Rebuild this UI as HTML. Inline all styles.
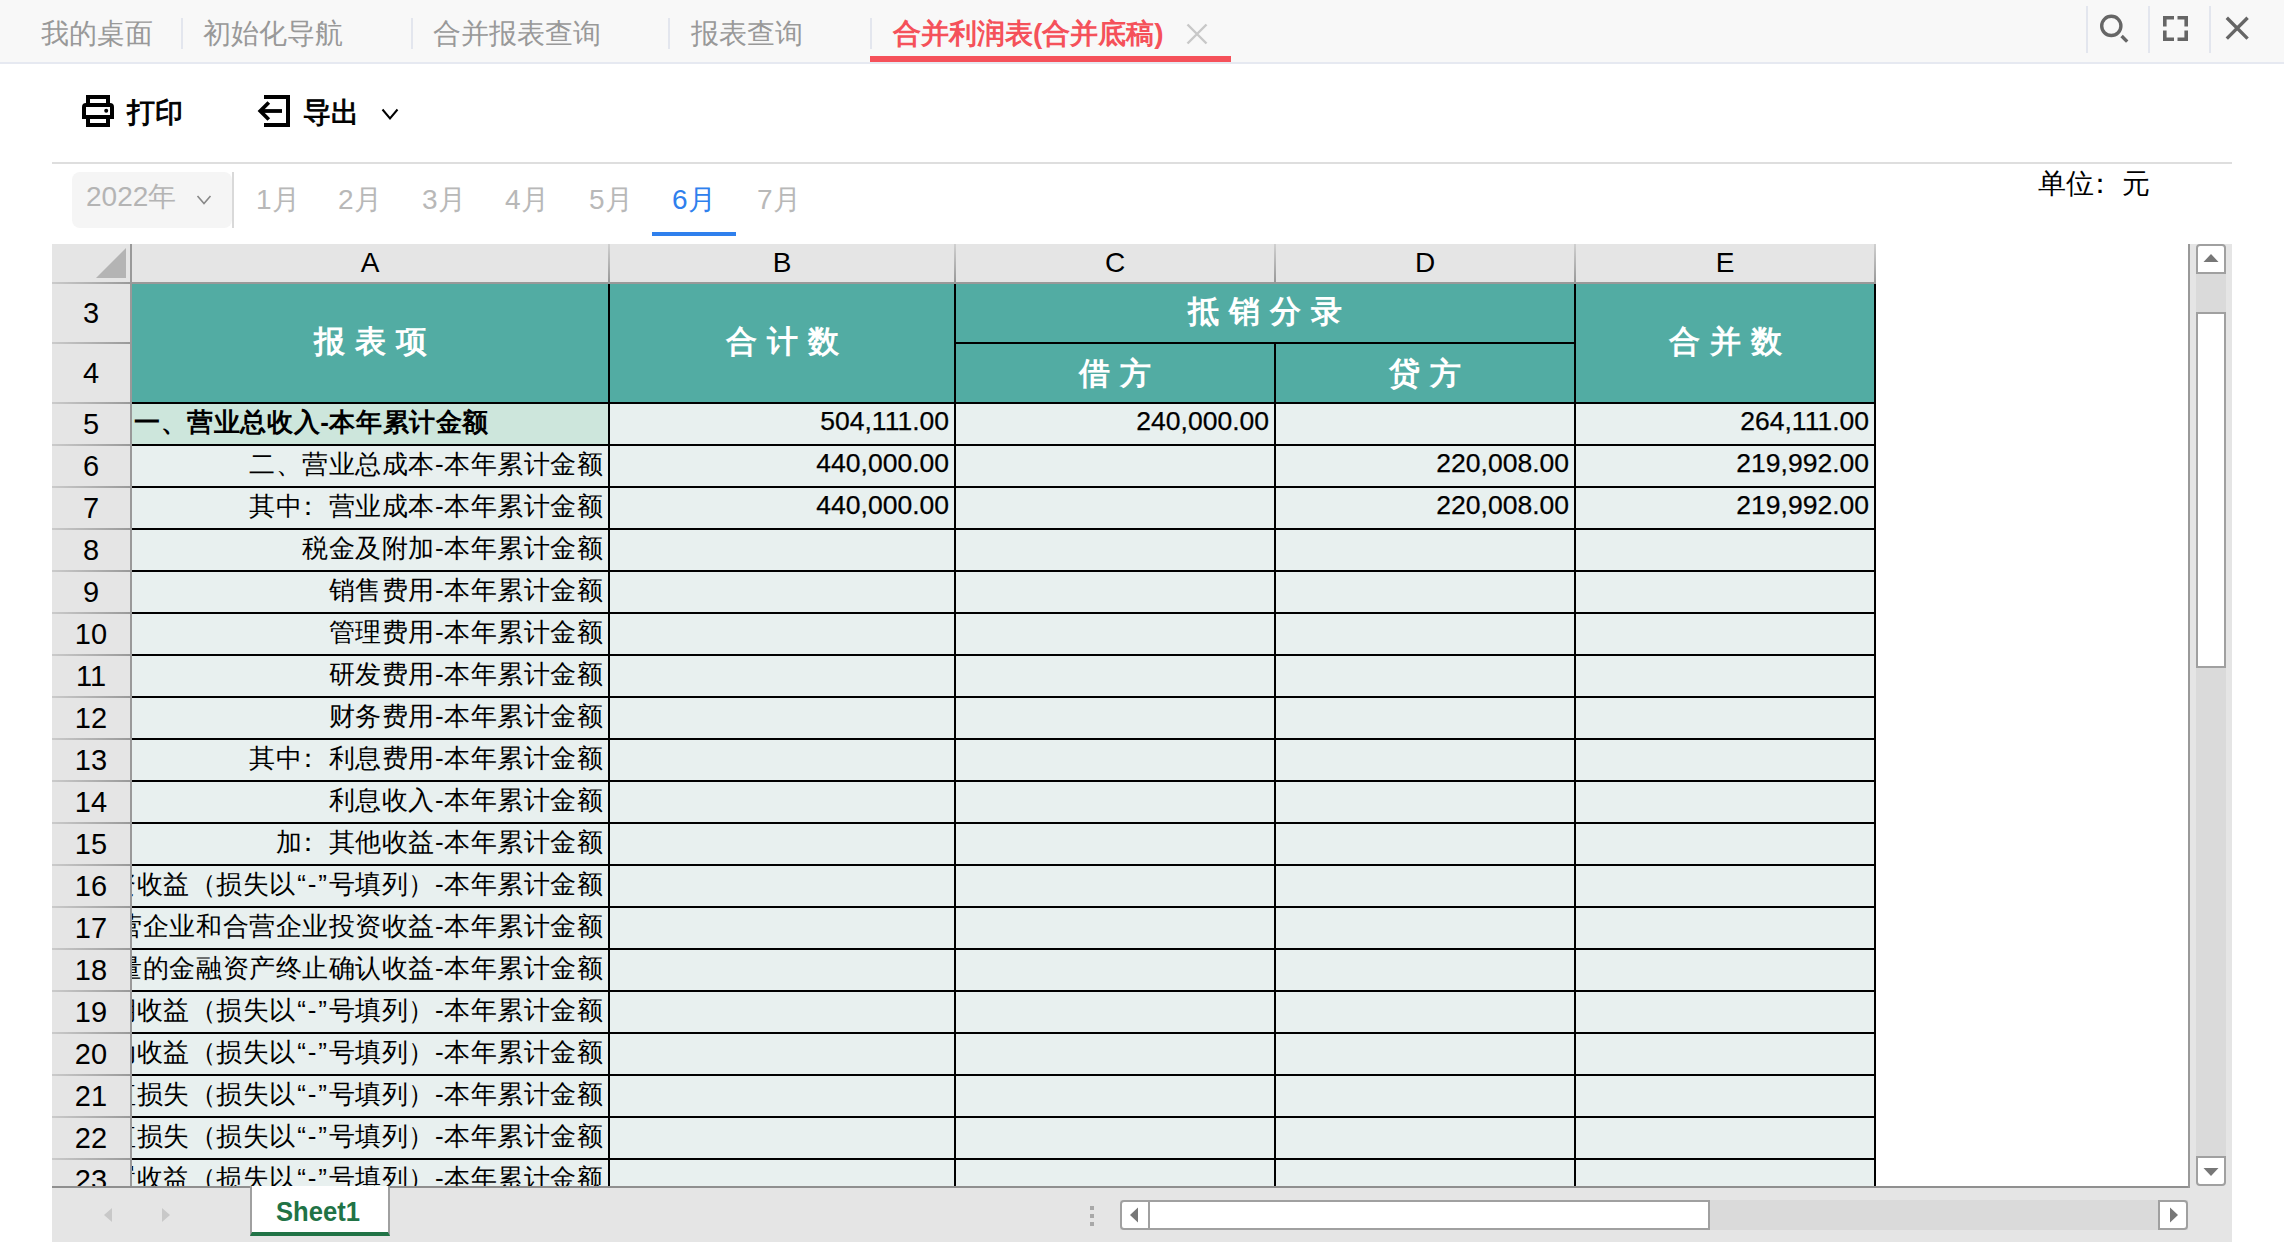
<!DOCTYPE html>
<html><head><meta charset="utf-8"><style>
*{margin:0;padding:0;box-sizing:border-box}
html,body{width:2284px;height:1250px;overflow:hidden;background:#fff;font-family:"Liberation Sans",sans-serif;position:relative}
.a{position:absolute}
.t{position:absolute;white-space:nowrap;line-height:1}
</style></head><body>

<div class="a" style="left:0;top:0;width:2284px;height:62px;background:#f8f8f8"></div>
<div class="a" style="left:0;top:62px;width:2284px;height:2px;background:#e6e9f1"></div>
<div class="t" style="left:41px;top:20px;font-size:28px;color:#999">我的桌面</div>
<div class="t" style="left:203px;top:20px;font-size:28px;color:#999">初始化导航</div>
<div class="t" style="left:433px;top:20px;font-size:28px;color:#999">合并报表查询</div>
<div class="t" style="left:691px;top:20px;font-size:28px;color:#999">报表查询</div>
<div class="a" style="left:181px;top:18px;width:2px;height:31px;background:#e3e6ee"></div>
<div class="a" style="left:411px;top:18px;width:2px;height:31px;background:#e3e6ee"></div>
<div class="a" style="left:668px;top:18px;width:2px;height:31px;background:#e3e6ee"></div>
<div class="a" style="left:870px;top:18px;width:2px;height:31px;background:#e3e6ee"></div>
<div class="t" style="left:893px;top:20px;font-size:28px;color:#f5515a;font-weight:bold">合并利润表(合并底稿)</div>
<svg class="a" style="left:1185px;top:22px" width="24" height="24" viewBox="0 0 24 24"><path d="M2.5 2.5L21.5 21.5M21.5 2.5L2.5 21.5" stroke="#c8c8c8" stroke-width="2.4" fill="none"/></svg>
<div class="a" style="left:870px;top:56px;width:361px;height:6px;background:#f5515a"></div>
<div class="a" style="left:2086px;top:6px;width:2px;height:47px;background:#e3e6ee"></div>
<div class="a" style="left:2148px;top:6px;width:2px;height:47px;background:#e3e6ee"></div>
<div class="a" style="left:2209px;top:6px;width:2px;height:47px;background:#e3e6ee"></div>
<svg class="a" style="left:2096px;top:10px" width="36" height="36" viewBox="0 0 36 36"><circle cx="15.3" cy="15.9" r="9.6" stroke="#666" stroke-width="3.4" fill="none"/><path d="M25.6 26L31.2 31.6" stroke="#666" stroke-width="3.4" fill="none"/></svg>
<svg class="a" style="left:2163px;top:16px" width="26" height="26" viewBox="0 0 26 26"><path d="M1.8 10.6V1.8H11M14.5 1.8H23.2V10.6M23.2 14.5V23.2H14.5M11 23.2H1.8V14.5" stroke="#666" stroke-width="3.6" fill="none"/></svg>
<svg class="a" style="left:2224px;top:15px" width="26" height="26" viewBox="0 0 26 26"><path d="M2.8 2.8L23.6 23.6M23.6 2.8L2.8 23.6" stroke="#666" stroke-width="3.4" fill="none"/></svg>
<svg class="a" style="left:82px;top:95px" width="32" height="32" viewBox="0 0 32 32">
<path d="M4 0H28V8H24V4H8V8H4Z" fill="#000"/>
<path d="M4 8H28A4 4 0 0 1 32 12V24H28V20H4V24H0V12A4 4 0 0 1 4 8ZM4 12V20H28V12Z" fill="#000" fill-rule="evenodd"/>
<circle cx="24.2" cy="15.7" r="2" fill="#000"/>
<path d="M4 20H28V32H4ZM8 24V28H24V24Z" fill="#000" fill-rule="evenodd"/>
</svg>
<div class="t" style="left:127px;top:99px;font-size:28px;color:#000;-webkit-text-stroke:0.9px #000">打印</div>
<svg class="a" style="left:256px;top:94px" width="36" height="34" viewBox="0 0 36 34">
<path d="M8 1H34V33H8V29H30V5H8Z" fill="#000"/>
<path d="M4 17H26" stroke="#000" stroke-width="3.8" fill="none"/>
<path d="M12.8 8.5L4.3 17L12.8 25.5" stroke="#000" stroke-width="3.8" fill="none"/>
</svg>
<div class="t" style="left:303px;top:99px;font-size:28px;color:#000;-webkit-text-stroke:0.9px #000">导出</div>
<svg class="a" style="left:381px;top:107px" width="18" height="14" viewBox="0 0 18 14"><path d="M1.5 2.5L9 11.5L16.5 2.5" stroke="#000" stroke-width="2" fill="none"/></svg>
<div class="a" style="left:52px;top:162px;width:2180px;height:2px;background:#dedede"></div>
<div class="a" style="left:72px;top:172px;width:160px;height:56px;background:#f5f5f5;border-radius:8px"></div>
<div class="t" style="left:86px;top:183px;font-size:28px;color:#b4b4b4">2022年</div>
<svg class="a" style="left:196px;top:193px" width="16" height="14" viewBox="0 0 16 14"><path d="M1.5 3L8 10.5L14.5 3" stroke="#888" stroke-width="1.6" fill="none"/></svg>
<div class="a" style="left:232px;top:172px;width:2px;height:56px;background:#d9d9d9"></div>
<div class="t" style="left:256px;top:186px;font-size:28px;color:#b8b8b8">1月</div>
<div class="t" style="left:338px;top:186px;font-size:28px;color:#b8b8b8">2月</div>
<div class="t" style="left:422px;top:186px;font-size:28px;color:#b8b8b8">3月</div>
<div class="t" style="left:505px;top:186px;font-size:28px;color:#b8b8b8">4月</div>
<div class="t" style="left:589px;top:186px;font-size:28px;color:#b8b8b8">5月</div>
<div class="t" style="left:672px;top:186px;font-size:28px;color:#2f80ed">6月</div>
<div class="t" style="left:757px;top:186px;font-size:28px;color:#b8b8b8">7月</div>
<div class="a" style="left:652px;top:232px;width:84px;height:4px;background:#2f80ed"></div>
<div class="t" style="left:2038px;top:170px;font-size:28px;color:#000">单位<span style="position:relative;left:-8px">：</span>元</div>
<div class="a" style="left:52px;top:244px;width:2136px;height:942px;overflow:hidden;background:#fff">
<div class="a" style="left:0px;top:0px;width:1824px;height:38px;background:#e5e5e5;"></div>
<div class="a" style="left:0px;top:0px;width:78px;height:942px;background:#e5e5e5;"></div>
<div class="a" style="left:0px;top:38px;width:1824px;height:2px;background:#999;"></div>
<div class="a" style="left:0px;top:38px;width:78px;height:2px;background:linear-gradient(to right,#cacaca,#999);"></div>
<div class="a" style="left:78px;top:0px;width:2px;height:38px;background:linear-gradient(to bottom,#d0d0d0,#999);"></div>
<div class="a" style="left:556px;top:0px;width:2px;height:38px;background:linear-gradient(to bottom,#d0d0d0,#999);"></div>
<div class="a" style="left:902px;top:0px;width:2px;height:38px;background:linear-gradient(to bottom,#d0d0d0,#999);"></div>
<div class="a" style="left:1222px;top:0px;width:2px;height:38px;background:linear-gradient(to bottom,#d0d0d0,#999);"></div>
<div class="a" style="left:1522px;top:0px;width:2px;height:38px;background:linear-gradient(to bottom,#d0d0d0,#999);"></div>
<div class="a" style="left:1822px;top:0px;width:2px;height:38px;background:linear-gradient(to bottom,#d0d0d0,#999);"></div>
<svg class="a" style="left:44px;top:4px" width="30" height="30" viewBox="0 0 30 30"><path d="M0 30L30 0V30Z" fill="#b4b4b4"/></svg>
<div class="a" style="left:80px;top:0px;width:476px;height:38px;display:flex;align-items:center;overflow:hidden;justify-content:center;font-size:28px;color:#000"><span style="white-space:nowrap;line-height:1;position:relative;top:0px">A</span></div>
<div class="a" style="left:558px;top:0px;width:344px;height:38px;display:flex;align-items:center;overflow:hidden;justify-content:center;font-size:28px;color:#000"><span style="white-space:nowrap;line-height:1;position:relative;top:0px">B</span></div>
<div class="a" style="left:904px;top:0px;width:318px;height:38px;display:flex;align-items:center;overflow:hidden;justify-content:center;font-size:28px;color:#000"><span style="white-space:nowrap;line-height:1;position:relative;top:0px">C</span></div>
<div class="a" style="left:1224px;top:0px;width:298px;height:38px;display:flex;align-items:center;overflow:hidden;justify-content:center;font-size:28px;color:#000"><span style="white-space:nowrap;line-height:1;position:relative;top:0px">D</span></div>
<div class="a" style="left:1524px;top:0px;width:298px;height:38px;display:flex;align-items:center;overflow:hidden;justify-content:center;font-size:28px;color:#000"><span style="white-space:nowrap;line-height:1;position:relative;top:0px">E</span></div>
<div class="a" style="left:0px;top:40px;width:78px;height:58px;display:flex;align-items:center;overflow:hidden;justify-content:center;font-size:29px;color:#000"><span style="white-space:nowrap;line-height:1;position:relative;top:0px">3</span></div>
<div class="a" style="left:0px;top:98px;width:78px;height:2px;background:linear-gradient(to right,#cacaca,#999);"></div>
<div class="a" style="left:0px;top:100px;width:78px;height:58px;display:flex;align-items:center;overflow:hidden;justify-content:center;font-size:29px;color:#000"><span style="white-space:nowrap;line-height:1;position:relative;top:0px">4</span></div>
<div class="a" style="left:0px;top:158px;width:78px;height:2px;background:linear-gradient(to right,#cacaca,#999);"></div>
<div class="a" style="left:0px;top:160px;width:78px;height:40px;display:flex;align-items:center;overflow:hidden;justify-content:center;font-size:29px;color:#000"><span style="white-space:nowrap;line-height:1;position:relative;top:0px">5</span></div>
<div class="a" style="left:0px;top:200px;width:78px;height:2px;background:linear-gradient(to right,#cacaca,#999);"></div>
<div class="a" style="left:0px;top:202px;width:78px;height:40px;display:flex;align-items:center;overflow:hidden;justify-content:center;font-size:29px;color:#000"><span style="white-space:nowrap;line-height:1;position:relative;top:0px">6</span></div>
<div class="a" style="left:0px;top:242px;width:78px;height:2px;background:linear-gradient(to right,#cacaca,#999);"></div>
<div class="a" style="left:0px;top:244px;width:78px;height:40px;display:flex;align-items:center;overflow:hidden;justify-content:center;font-size:29px;color:#000"><span style="white-space:nowrap;line-height:1;position:relative;top:0px">7</span></div>
<div class="a" style="left:0px;top:284px;width:78px;height:2px;background:linear-gradient(to right,#cacaca,#999);"></div>
<div class="a" style="left:0px;top:286px;width:78px;height:40px;display:flex;align-items:center;overflow:hidden;justify-content:center;font-size:29px;color:#000"><span style="white-space:nowrap;line-height:1;position:relative;top:0px">8</span></div>
<div class="a" style="left:0px;top:326px;width:78px;height:2px;background:linear-gradient(to right,#cacaca,#999);"></div>
<div class="a" style="left:0px;top:328px;width:78px;height:40px;display:flex;align-items:center;overflow:hidden;justify-content:center;font-size:29px;color:#000"><span style="white-space:nowrap;line-height:1;position:relative;top:0px">9</span></div>
<div class="a" style="left:0px;top:368px;width:78px;height:2px;background:linear-gradient(to right,#cacaca,#999);"></div>
<div class="a" style="left:0px;top:370px;width:78px;height:40px;display:flex;align-items:center;overflow:hidden;justify-content:center;font-size:29px;color:#000"><span style="white-space:nowrap;line-height:1;position:relative;top:0px">10</span></div>
<div class="a" style="left:0px;top:410px;width:78px;height:2px;background:linear-gradient(to right,#cacaca,#999);"></div>
<div class="a" style="left:0px;top:412px;width:78px;height:40px;display:flex;align-items:center;overflow:hidden;justify-content:center;font-size:29px;color:#000"><span style="white-space:nowrap;line-height:1;position:relative;top:0px">11</span></div>
<div class="a" style="left:0px;top:452px;width:78px;height:2px;background:linear-gradient(to right,#cacaca,#999);"></div>
<div class="a" style="left:0px;top:454px;width:78px;height:40px;display:flex;align-items:center;overflow:hidden;justify-content:center;font-size:29px;color:#000"><span style="white-space:nowrap;line-height:1;position:relative;top:0px">12</span></div>
<div class="a" style="left:0px;top:494px;width:78px;height:2px;background:linear-gradient(to right,#cacaca,#999);"></div>
<div class="a" style="left:0px;top:496px;width:78px;height:40px;display:flex;align-items:center;overflow:hidden;justify-content:center;font-size:29px;color:#000"><span style="white-space:nowrap;line-height:1;position:relative;top:0px">13</span></div>
<div class="a" style="left:0px;top:536px;width:78px;height:2px;background:linear-gradient(to right,#cacaca,#999);"></div>
<div class="a" style="left:0px;top:538px;width:78px;height:40px;display:flex;align-items:center;overflow:hidden;justify-content:center;font-size:29px;color:#000"><span style="white-space:nowrap;line-height:1;position:relative;top:0px">14</span></div>
<div class="a" style="left:0px;top:578px;width:78px;height:2px;background:linear-gradient(to right,#cacaca,#999);"></div>
<div class="a" style="left:0px;top:580px;width:78px;height:40px;display:flex;align-items:center;overflow:hidden;justify-content:center;font-size:29px;color:#000"><span style="white-space:nowrap;line-height:1;position:relative;top:0px">15</span></div>
<div class="a" style="left:0px;top:620px;width:78px;height:2px;background:linear-gradient(to right,#cacaca,#999);"></div>
<div class="a" style="left:0px;top:622px;width:78px;height:40px;display:flex;align-items:center;overflow:hidden;justify-content:center;font-size:29px;color:#000"><span style="white-space:nowrap;line-height:1;position:relative;top:0px">16</span></div>
<div class="a" style="left:0px;top:662px;width:78px;height:2px;background:linear-gradient(to right,#cacaca,#999);"></div>
<div class="a" style="left:0px;top:664px;width:78px;height:40px;display:flex;align-items:center;overflow:hidden;justify-content:center;font-size:29px;color:#000"><span style="white-space:nowrap;line-height:1;position:relative;top:0px">17</span></div>
<div class="a" style="left:0px;top:704px;width:78px;height:2px;background:linear-gradient(to right,#cacaca,#999);"></div>
<div class="a" style="left:0px;top:706px;width:78px;height:40px;display:flex;align-items:center;overflow:hidden;justify-content:center;font-size:29px;color:#000"><span style="white-space:nowrap;line-height:1;position:relative;top:0px">18</span></div>
<div class="a" style="left:0px;top:746px;width:78px;height:2px;background:linear-gradient(to right,#cacaca,#999);"></div>
<div class="a" style="left:0px;top:748px;width:78px;height:40px;display:flex;align-items:center;overflow:hidden;justify-content:center;font-size:29px;color:#000"><span style="white-space:nowrap;line-height:1;position:relative;top:0px">19</span></div>
<div class="a" style="left:0px;top:788px;width:78px;height:2px;background:linear-gradient(to right,#cacaca,#999);"></div>
<div class="a" style="left:0px;top:790px;width:78px;height:40px;display:flex;align-items:center;overflow:hidden;justify-content:center;font-size:29px;color:#000"><span style="white-space:nowrap;line-height:1;position:relative;top:0px">20</span></div>
<div class="a" style="left:0px;top:830px;width:78px;height:2px;background:linear-gradient(to right,#cacaca,#999);"></div>
<div class="a" style="left:0px;top:832px;width:78px;height:40px;display:flex;align-items:center;overflow:hidden;justify-content:center;font-size:29px;color:#000"><span style="white-space:nowrap;line-height:1;position:relative;top:0px">21</span></div>
<div class="a" style="left:0px;top:872px;width:78px;height:2px;background:linear-gradient(to right,#cacaca,#999);"></div>
<div class="a" style="left:0px;top:874px;width:78px;height:40px;display:flex;align-items:center;overflow:hidden;justify-content:center;font-size:29px;color:#000"><span style="white-space:nowrap;line-height:1;position:relative;top:0px">22</span></div>
<div class="a" style="left:0px;top:914px;width:78px;height:2px;background:linear-gradient(to right,#cacaca,#999);"></div>
<div class="a" style="left:0px;top:916px;width:78px;height:40px;display:flex;align-items:center;overflow:hidden;justify-content:center;font-size:29px;color:#000"><span style="white-space:nowrap;line-height:1;position:relative;top:0px">23</span></div>
<div class="a" style="left:0px;top:956px;width:78px;height:2px;background:linear-gradient(to right,#cacaca,#999);"></div>
<div class="a" style="left:78px;top:0px;width:2px;height:942px;background:#999;"></div>
<div class="a" style="left:80px;top:40px;width:1742px;height:118px;background:#52aca3;"></div>
<div class="a" style="left:556px;top:40px;width:2px;height:120px;background:#000;"></div>
<div class="a" style="left:902px;top:40px;width:2px;height:120px;background:#000;"></div>
<div class="a" style="left:1522px;top:40px;width:2px;height:120px;background:#000;"></div>
<div class="a" style="left:1822px;top:40px;width:2px;height:120px;background:#000;"></div>
<div class="a" style="left:902px;top:98px;width:622px;height:2px;background:#000;"></div>
<div class="a" style="left:1222px;top:98px;width:2px;height:60px;background:#000;"></div>
<div class="a" style="left:80px;top:158px;width:1744px;height:2px;background:#000;"></div>
<div class="a" style="left:80px;top:40px;width:476px;height:118px;display:flex;align-items:center;overflow:hidden;justify-content:center;font-size:31px;color:#fff;font-weight:bold;letter-spacing:10px;padding-left:10px"><span style="white-space:nowrap;line-height:1;position:relative;top:-2px">报表项</span></div>
<div class="a" style="left:558px;top:40px;width:344px;height:118px;display:flex;align-items:center;overflow:hidden;justify-content:center;font-size:31px;color:#fff;font-weight:bold;letter-spacing:10px;padding-left:10px"><span style="white-space:nowrap;line-height:1;position:relative;top:-2px">合计数</span></div>
<div class="a" style="left:904px;top:40px;width:618px;height:58px;display:flex;align-items:center;overflow:hidden;justify-content:center;font-size:31px;color:#fff;font-weight:bold;letter-spacing:10px;padding-left:10px"><span style="white-space:nowrap;line-height:1;position:relative;top:-1.5px">抵销分录</span></div>
<div class="a" style="left:904px;top:100px;width:318px;height:58px;display:flex;align-items:center;overflow:hidden;justify-content:center;font-size:31px;color:#fff;font-weight:bold;letter-spacing:10px;padding-left:10px"><span style="white-space:nowrap;line-height:1;position:relative;top:0px">借方</span></div>
<div class="a" style="left:1224px;top:100px;width:298px;height:58px;display:flex;align-items:center;overflow:hidden;justify-content:center;font-size:31px;color:#fff;font-weight:bold;letter-spacing:10px;padding-left:10px"><span style="white-space:nowrap;line-height:1;position:relative;top:0px">贷方</span></div>
<div class="a" style="left:1524px;top:40px;width:298px;height:118px;display:flex;align-items:center;overflow:hidden;justify-content:center;font-size:31px;color:#fff;font-weight:bold;letter-spacing:10px;padding-left:10px"><span style="white-space:nowrap;line-height:1;position:relative;top:-2px">合并数</span></div>
<div class="a" style="left:80px;top:160px;width:476px;height:40px;background:#cde6dc;"></div>
<div class="a" style="left:558px;top:160px;width:1264px;height:40px;background:#e8f0ef;"></div>
<div class="a" style="left:80px;top:200px;width:1744px;height:2px;background:#000;"></div>
<div class="a" style="left:556px;top:160px;width:2px;height:42px;background:#000;"></div>
<div class="a" style="left:902px;top:160px;width:2px;height:42px;background:#000;"></div>
<div class="a" style="left:1222px;top:160px;width:2px;height:42px;background:#000;"></div>
<div class="a" style="left:1522px;top:160px;width:2px;height:42px;background:#000;"></div>
<div class="a" style="left:1822px;top:160px;width:2px;height:42px;background:#000;"></div>
<div class="a" style="left:80px;top:160px;width:476px;height:40px;display:flex;align-items:center;overflow:hidden;justify-content:flex-start;padding-left:2px;font-size:26px;letter-spacing:0.6px;color:#000;font-weight:bold"><span style="white-space:nowrap;line-height:1;position:relative;top:-2px">一、营业总收入-本年累计金额</span></div>
<div class="a" style="left:558px;top:160px;width:344px;height:40px;display:flex;align-items:center;overflow:hidden;justify-content:flex-end;padding-right:5px;font-size:26.5px;color:#000;-webkit-text-stroke:0.25px #000"><span style="white-space:nowrap;line-height:1;position:relative;top:-2.5px">504,111.00</span></div>
<div class="a" style="left:904px;top:160px;width:318px;height:40px;display:flex;align-items:center;overflow:hidden;justify-content:flex-end;padding-right:5px;font-size:26.5px;color:#000;-webkit-text-stroke:0.25px #000"><span style="white-space:nowrap;line-height:1;position:relative;top:-2.5px">240,000.00</span></div>
<div class="a" style="left:1524px;top:160px;width:298px;height:40px;display:flex;align-items:center;overflow:hidden;justify-content:flex-end;padding-right:5px;font-size:26.5px;color:#000;-webkit-text-stroke:0.25px #000"><span style="white-space:nowrap;line-height:1;position:relative;top:-2.5px">264,111.00</span></div>
<div class="a" style="left:80px;top:202px;width:476px;height:40px;background:#e8f0ef;"></div>
<div class="a" style="left:558px;top:202px;width:1264px;height:40px;background:#e8f0ef;"></div>
<div class="a" style="left:80px;top:242px;width:1744px;height:2px;background:#000;"></div>
<div class="a" style="left:556px;top:202px;width:2px;height:42px;background:#000;"></div>
<div class="a" style="left:902px;top:202px;width:2px;height:42px;background:#000;"></div>
<div class="a" style="left:1222px;top:202px;width:2px;height:42px;background:#000;"></div>
<div class="a" style="left:1522px;top:202px;width:2px;height:42px;background:#000;"></div>
<div class="a" style="left:1822px;top:202px;width:2px;height:42px;background:#000;"></div>
<div class="a" style="left:80px;top:202px;width:476px;height:40px;display:flex;align-items:center;overflow:hidden;justify-content:flex-end;padding-right:4.5px;font-size:26px;letter-spacing:0.55px;color:#000"><span style="white-space:nowrap;line-height:1;position:relative;top:-2px">二、营业总成本-本年累计金额</span></div>
<div class="a" style="left:558px;top:202px;width:344px;height:40px;display:flex;align-items:center;overflow:hidden;justify-content:flex-end;padding-right:5px;font-size:26.5px;color:#000;-webkit-text-stroke:0.25px #000"><span style="white-space:nowrap;line-height:1;position:relative;top:-2.5px">440,000.00</span></div>
<div class="a" style="left:1224px;top:202px;width:298px;height:40px;display:flex;align-items:center;overflow:hidden;justify-content:flex-end;padding-right:5px;font-size:26.5px;color:#000;-webkit-text-stroke:0.25px #000"><span style="white-space:nowrap;line-height:1;position:relative;top:-2.5px">220,008.00</span></div>
<div class="a" style="left:1524px;top:202px;width:298px;height:40px;display:flex;align-items:center;overflow:hidden;justify-content:flex-end;padding-right:5px;font-size:26.5px;color:#000;-webkit-text-stroke:0.25px #000"><span style="white-space:nowrap;line-height:1;position:relative;top:-2.5px">219,992.00</span></div>
<div class="a" style="left:80px;top:244px;width:476px;height:40px;background:#e8f0ef;"></div>
<div class="a" style="left:558px;top:244px;width:1264px;height:40px;background:#e8f0ef;"></div>
<div class="a" style="left:80px;top:284px;width:1744px;height:2px;background:#000;"></div>
<div class="a" style="left:556px;top:244px;width:2px;height:42px;background:#000;"></div>
<div class="a" style="left:902px;top:244px;width:2px;height:42px;background:#000;"></div>
<div class="a" style="left:1222px;top:244px;width:2px;height:42px;background:#000;"></div>
<div class="a" style="left:1522px;top:244px;width:2px;height:42px;background:#000;"></div>
<div class="a" style="left:1822px;top:244px;width:2px;height:42px;background:#000;"></div>
<div class="a" style="left:80px;top:244px;width:476px;height:40px;display:flex;align-items:center;overflow:hidden;justify-content:flex-end;padding-right:4.5px;font-size:26px;letter-spacing:0.55px;color:#000"><span style="white-space:nowrap;line-height:1;position:relative;top:-2px">其中<span style="position:relative;left:-7px">：</span>营业成本-本年累计金额</span></div>
<div class="a" style="left:558px;top:244px;width:344px;height:40px;display:flex;align-items:center;overflow:hidden;justify-content:flex-end;padding-right:5px;font-size:26.5px;color:#000;-webkit-text-stroke:0.25px #000"><span style="white-space:nowrap;line-height:1;position:relative;top:-2.5px">440,000.00</span></div>
<div class="a" style="left:1224px;top:244px;width:298px;height:40px;display:flex;align-items:center;overflow:hidden;justify-content:flex-end;padding-right:5px;font-size:26.5px;color:#000;-webkit-text-stroke:0.25px #000"><span style="white-space:nowrap;line-height:1;position:relative;top:-2.5px">220,008.00</span></div>
<div class="a" style="left:1524px;top:244px;width:298px;height:40px;display:flex;align-items:center;overflow:hidden;justify-content:flex-end;padding-right:5px;font-size:26.5px;color:#000;-webkit-text-stroke:0.25px #000"><span style="white-space:nowrap;line-height:1;position:relative;top:-2.5px">219,992.00</span></div>
<div class="a" style="left:80px;top:286px;width:476px;height:40px;background:#e8f0ef;"></div>
<div class="a" style="left:558px;top:286px;width:1264px;height:40px;background:#e8f0ef;"></div>
<div class="a" style="left:80px;top:326px;width:1744px;height:2px;background:#000;"></div>
<div class="a" style="left:556px;top:286px;width:2px;height:42px;background:#000;"></div>
<div class="a" style="left:902px;top:286px;width:2px;height:42px;background:#000;"></div>
<div class="a" style="left:1222px;top:286px;width:2px;height:42px;background:#000;"></div>
<div class="a" style="left:1522px;top:286px;width:2px;height:42px;background:#000;"></div>
<div class="a" style="left:1822px;top:286px;width:2px;height:42px;background:#000;"></div>
<div class="a" style="left:80px;top:286px;width:476px;height:40px;display:flex;align-items:center;overflow:hidden;justify-content:flex-end;padding-right:4.5px;font-size:26px;letter-spacing:0.55px;color:#000"><span style="white-space:nowrap;line-height:1;position:relative;top:-2px">税金及附加-本年累计金额</span></div>
<div class="a" style="left:80px;top:328px;width:476px;height:40px;background:#e8f0ef;"></div>
<div class="a" style="left:558px;top:328px;width:1264px;height:40px;background:#e8f0ef;"></div>
<div class="a" style="left:80px;top:368px;width:1744px;height:2px;background:#000;"></div>
<div class="a" style="left:556px;top:328px;width:2px;height:42px;background:#000;"></div>
<div class="a" style="left:902px;top:328px;width:2px;height:42px;background:#000;"></div>
<div class="a" style="left:1222px;top:328px;width:2px;height:42px;background:#000;"></div>
<div class="a" style="left:1522px;top:328px;width:2px;height:42px;background:#000;"></div>
<div class="a" style="left:1822px;top:328px;width:2px;height:42px;background:#000;"></div>
<div class="a" style="left:80px;top:328px;width:476px;height:40px;display:flex;align-items:center;overflow:hidden;justify-content:flex-end;padding-right:4.5px;font-size:26px;letter-spacing:0.55px;color:#000"><span style="white-space:nowrap;line-height:1;position:relative;top:-2px">销售费用-本年累计金额</span></div>
<div class="a" style="left:80px;top:370px;width:476px;height:40px;background:#e8f0ef;"></div>
<div class="a" style="left:558px;top:370px;width:1264px;height:40px;background:#e8f0ef;"></div>
<div class="a" style="left:80px;top:410px;width:1744px;height:2px;background:#000;"></div>
<div class="a" style="left:556px;top:370px;width:2px;height:42px;background:#000;"></div>
<div class="a" style="left:902px;top:370px;width:2px;height:42px;background:#000;"></div>
<div class="a" style="left:1222px;top:370px;width:2px;height:42px;background:#000;"></div>
<div class="a" style="left:1522px;top:370px;width:2px;height:42px;background:#000;"></div>
<div class="a" style="left:1822px;top:370px;width:2px;height:42px;background:#000;"></div>
<div class="a" style="left:80px;top:370px;width:476px;height:40px;display:flex;align-items:center;overflow:hidden;justify-content:flex-end;padding-right:4.5px;font-size:26px;letter-spacing:0.55px;color:#000"><span style="white-space:nowrap;line-height:1;position:relative;top:-2px">管理费用-本年累计金额</span></div>
<div class="a" style="left:80px;top:412px;width:476px;height:40px;background:#e8f0ef;"></div>
<div class="a" style="left:558px;top:412px;width:1264px;height:40px;background:#e8f0ef;"></div>
<div class="a" style="left:80px;top:452px;width:1744px;height:2px;background:#000;"></div>
<div class="a" style="left:556px;top:412px;width:2px;height:42px;background:#000;"></div>
<div class="a" style="left:902px;top:412px;width:2px;height:42px;background:#000;"></div>
<div class="a" style="left:1222px;top:412px;width:2px;height:42px;background:#000;"></div>
<div class="a" style="left:1522px;top:412px;width:2px;height:42px;background:#000;"></div>
<div class="a" style="left:1822px;top:412px;width:2px;height:42px;background:#000;"></div>
<div class="a" style="left:80px;top:412px;width:476px;height:40px;display:flex;align-items:center;overflow:hidden;justify-content:flex-end;padding-right:4.5px;font-size:26px;letter-spacing:0.55px;color:#000"><span style="white-space:nowrap;line-height:1;position:relative;top:-2px">研发费用-本年累计金额</span></div>
<div class="a" style="left:80px;top:454px;width:476px;height:40px;background:#e8f0ef;"></div>
<div class="a" style="left:558px;top:454px;width:1264px;height:40px;background:#e8f0ef;"></div>
<div class="a" style="left:80px;top:494px;width:1744px;height:2px;background:#000;"></div>
<div class="a" style="left:556px;top:454px;width:2px;height:42px;background:#000;"></div>
<div class="a" style="left:902px;top:454px;width:2px;height:42px;background:#000;"></div>
<div class="a" style="left:1222px;top:454px;width:2px;height:42px;background:#000;"></div>
<div class="a" style="left:1522px;top:454px;width:2px;height:42px;background:#000;"></div>
<div class="a" style="left:1822px;top:454px;width:2px;height:42px;background:#000;"></div>
<div class="a" style="left:80px;top:454px;width:476px;height:40px;display:flex;align-items:center;overflow:hidden;justify-content:flex-end;padding-right:4.5px;font-size:26px;letter-spacing:0.55px;color:#000"><span style="white-space:nowrap;line-height:1;position:relative;top:-2px">财务费用-本年累计金额</span></div>
<div class="a" style="left:80px;top:496px;width:476px;height:40px;background:#e8f0ef;"></div>
<div class="a" style="left:558px;top:496px;width:1264px;height:40px;background:#e8f0ef;"></div>
<div class="a" style="left:80px;top:536px;width:1744px;height:2px;background:#000;"></div>
<div class="a" style="left:556px;top:496px;width:2px;height:42px;background:#000;"></div>
<div class="a" style="left:902px;top:496px;width:2px;height:42px;background:#000;"></div>
<div class="a" style="left:1222px;top:496px;width:2px;height:42px;background:#000;"></div>
<div class="a" style="left:1522px;top:496px;width:2px;height:42px;background:#000;"></div>
<div class="a" style="left:1822px;top:496px;width:2px;height:42px;background:#000;"></div>
<div class="a" style="left:80px;top:496px;width:476px;height:40px;display:flex;align-items:center;overflow:hidden;justify-content:flex-end;padding-right:4.5px;font-size:26px;letter-spacing:0.55px;color:#000"><span style="white-space:nowrap;line-height:1;position:relative;top:-2px">其中<span style="position:relative;left:-7px">：</span>利息费用-本年累计金额</span></div>
<div class="a" style="left:80px;top:538px;width:476px;height:40px;background:#e8f0ef;"></div>
<div class="a" style="left:558px;top:538px;width:1264px;height:40px;background:#e8f0ef;"></div>
<div class="a" style="left:80px;top:578px;width:1744px;height:2px;background:#000;"></div>
<div class="a" style="left:556px;top:538px;width:2px;height:42px;background:#000;"></div>
<div class="a" style="left:902px;top:538px;width:2px;height:42px;background:#000;"></div>
<div class="a" style="left:1222px;top:538px;width:2px;height:42px;background:#000;"></div>
<div class="a" style="left:1522px;top:538px;width:2px;height:42px;background:#000;"></div>
<div class="a" style="left:1822px;top:538px;width:2px;height:42px;background:#000;"></div>
<div class="a" style="left:80px;top:538px;width:476px;height:40px;display:flex;align-items:center;overflow:hidden;justify-content:flex-end;padding-right:4.5px;font-size:26px;letter-spacing:0.55px;color:#000"><span style="white-space:nowrap;line-height:1;position:relative;top:-2px">利息收入-本年累计金额</span></div>
<div class="a" style="left:80px;top:580px;width:476px;height:40px;background:#e8f0ef;"></div>
<div class="a" style="left:558px;top:580px;width:1264px;height:40px;background:#e8f0ef;"></div>
<div class="a" style="left:80px;top:620px;width:1744px;height:2px;background:#000;"></div>
<div class="a" style="left:556px;top:580px;width:2px;height:42px;background:#000;"></div>
<div class="a" style="left:902px;top:580px;width:2px;height:42px;background:#000;"></div>
<div class="a" style="left:1222px;top:580px;width:2px;height:42px;background:#000;"></div>
<div class="a" style="left:1522px;top:580px;width:2px;height:42px;background:#000;"></div>
<div class="a" style="left:1822px;top:580px;width:2px;height:42px;background:#000;"></div>
<div class="a" style="left:80px;top:580px;width:476px;height:40px;display:flex;align-items:center;overflow:hidden;justify-content:flex-end;padding-right:4.5px;font-size:26px;letter-spacing:0.55px;color:#000"><span style="white-space:nowrap;line-height:1;position:relative;top:-2px">加<span style="position:relative;left:-7px">：</span>其他收益-本年累计金额</span></div>
<div class="a" style="left:80px;top:622px;width:476px;height:40px;background:#e8f0ef;"></div>
<div class="a" style="left:558px;top:622px;width:1264px;height:40px;background:#e8f0ef;"></div>
<div class="a" style="left:80px;top:662px;width:1744px;height:2px;background:#000;"></div>
<div class="a" style="left:556px;top:622px;width:2px;height:42px;background:#000;"></div>
<div class="a" style="left:902px;top:622px;width:2px;height:42px;background:#000;"></div>
<div class="a" style="left:1222px;top:622px;width:2px;height:42px;background:#000;"></div>
<div class="a" style="left:1522px;top:622px;width:2px;height:42px;background:#000;"></div>
<div class="a" style="left:1822px;top:622px;width:2px;height:42px;background:#000;"></div>
<div class="a" style="left:80px;top:622px;width:476px;height:40px;display:flex;align-items:center;overflow:hidden;justify-content:flex-end;padding-right:4.5px;font-size:26px;letter-spacing:0.55px;color:#000"><span style="white-space:nowrap;line-height:1;position:relative;top:-2px">投资收益（损失以<span style="padding:0 1.3px">“</span>-<span style="padding:0 1.3px">”</span>号填列）-本年累计金额</span></div>
<div class="a" style="left:80px;top:664px;width:476px;height:40px;background:#e8f0ef;"></div>
<div class="a" style="left:558px;top:664px;width:1264px;height:40px;background:#e8f0ef;"></div>
<div class="a" style="left:80px;top:704px;width:1744px;height:2px;background:#000;"></div>
<div class="a" style="left:556px;top:664px;width:2px;height:42px;background:#000;"></div>
<div class="a" style="left:902px;top:664px;width:2px;height:42px;background:#000;"></div>
<div class="a" style="left:1222px;top:664px;width:2px;height:42px;background:#000;"></div>
<div class="a" style="left:1522px;top:664px;width:2px;height:42px;background:#000;"></div>
<div class="a" style="left:1822px;top:664px;width:2px;height:42px;background:#000;"></div>
<div class="a" style="left:80px;top:664px;width:476px;height:40px;display:flex;align-items:center;overflow:hidden;justify-content:flex-end;padding-right:4.5px;font-size:26px;letter-spacing:0.55px;color:#000"><span style="white-space:nowrap;line-height:1;position:relative;top:-2px">其中<span style="position:relative;left:-7px">：</span>对联营企业和合营企业投资收益-本年累计金额</span></div>
<div class="a" style="left:80px;top:706px;width:476px;height:40px;background:#e8f0ef;"></div>
<div class="a" style="left:558px;top:706px;width:1264px;height:40px;background:#e8f0ef;"></div>
<div class="a" style="left:80px;top:746px;width:1744px;height:2px;background:#000;"></div>
<div class="a" style="left:556px;top:706px;width:2px;height:42px;background:#000;"></div>
<div class="a" style="left:902px;top:706px;width:2px;height:42px;background:#000;"></div>
<div class="a" style="left:1222px;top:706px;width:2px;height:42px;background:#000;"></div>
<div class="a" style="left:1522px;top:706px;width:2px;height:42px;background:#000;"></div>
<div class="a" style="left:1822px;top:706px;width:2px;height:42px;background:#000;"></div>
<div class="a" style="left:80px;top:706px;width:476px;height:40px;display:flex;align-items:center;overflow:hidden;justify-content:flex-end;padding-right:4.5px;font-size:26px;letter-spacing:0.55px;color:#000"><span style="white-space:nowrap;line-height:1;position:relative;top:-2px">以摊余成本计量的金融资产终止确认收益-本年累计金额</span></div>
<div class="a" style="left:80px;top:748px;width:476px;height:40px;background:#e8f0ef;"></div>
<div class="a" style="left:558px;top:748px;width:1264px;height:40px;background:#e8f0ef;"></div>
<div class="a" style="left:80px;top:788px;width:1744px;height:2px;background:#000;"></div>
<div class="a" style="left:556px;top:748px;width:2px;height:42px;background:#000;"></div>
<div class="a" style="left:902px;top:748px;width:2px;height:42px;background:#000;"></div>
<div class="a" style="left:1222px;top:748px;width:2px;height:42px;background:#000;"></div>
<div class="a" style="left:1522px;top:748px;width:2px;height:42px;background:#000;"></div>
<div class="a" style="left:1822px;top:748px;width:2px;height:42px;background:#000;"></div>
<div class="a" style="left:80px;top:748px;width:476px;height:40px;display:flex;align-items:center;overflow:hidden;justify-content:flex-end;padding-right:4.5px;font-size:26px;letter-spacing:0.55px;color:#000"><span style="white-space:nowrap;line-height:1;position:relative;top:-2px">净敞口套期收益（损失以<span style="padding:0 1.3px">“</span>-<span style="padding:0 1.3px">”</span>号填列）-本年累计金额</span></div>
<div class="a" style="left:80px;top:790px;width:476px;height:40px;background:#e8f0ef;"></div>
<div class="a" style="left:558px;top:790px;width:1264px;height:40px;background:#e8f0ef;"></div>
<div class="a" style="left:80px;top:830px;width:1744px;height:2px;background:#000;"></div>
<div class="a" style="left:556px;top:790px;width:2px;height:42px;background:#000;"></div>
<div class="a" style="left:902px;top:790px;width:2px;height:42px;background:#000;"></div>
<div class="a" style="left:1222px;top:790px;width:2px;height:42px;background:#000;"></div>
<div class="a" style="left:1522px;top:790px;width:2px;height:42px;background:#000;"></div>
<div class="a" style="left:1822px;top:790px;width:2px;height:42px;background:#000;"></div>
<div class="a" style="left:80px;top:790px;width:476px;height:40px;display:flex;align-items:center;overflow:hidden;justify-content:flex-end;padding-right:4.5px;font-size:26px;letter-spacing:0.55px;color:#000"><span style="white-space:nowrap;line-height:1;position:relative;top:-2px">公允价值变动收益（损失以<span style="padding:0 1.3px">“</span>-<span style="padding:0 1.3px">”</span>号填列）-本年累计金额</span></div>
<div class="a" style="left:80px;top:832px;width:476px;height:40px;background:#e8f0ef;"></div>
<div class="a" style="left:558px;top:832px;width:1264px;height:40px;background:#e8f0ef;"></div>
<div class="a" style="left:80px;top:872px;width:1744px;height:2px;background:#000;"></div>
<div class="a" style="left:556px;top:832px;width:2px;height:42px;background:#000;"></div>
<div class="a" style="left:902px;top:832px;width:2px;height:42px;background:#000;"></div>
<div class="a" style="left:1222px;top:832px;width:2px;height:42px;background:#000;"></div>
<div class="a" style="left:1522px;top:832px;width:2px;height:42px;background:#000;"></div>
<div class="a" style="left:1822px;top:832px;width:2px;height:42px;background:#000;"></div>
<div class="a" style="left:80px;top:832px;width:476px;height:40px;display:flex;align-items:center;overflow:hidden;justify-content:flex-end;padding-right:4.5px;font-size:26px;letter-spacing:0.55px;color:#000"><span style="white-space:nowrap;line-height:1;position:relative;top:-2px">信用减值损失（损失以<span style="padding:0 1.3px">“</span>-<span style="padding:0 1.3px">”</span>号填列）-本年累计金额</span></div>
<div class="a" style="left:80px;top:874px;width:476px;height:40px;background:#e8f0ef;"></div>
<div class="a" style="left:558px;top:874px;width:1264px;height:40px;background:#e8f0ef;"></div>
<div class="a" style="left:80px;top:914px;width:1744px;height:2px;background:#000;"></div>
<div class="a" style="left:556px;top:874px;width:2px;height:42px;background:#000;"></div>
<div class="a" style="left:902px;top:874px;width:2px;height:42px;background:#000;"></div>
<div class="a" style="left:1222px;top:874px;width:2px;height:42px;background:#000;"></div>
<div class="a" style="left:1522px;top:874px;width:2px;height:42px;background:#000;"></div>
<div class="a" style="left:1822px;top:874px;width:2px;height:42px;background:#000;"></div>
<div class="a" style="left:80px;top:874px;width:476px;height:40px;display:flex;align-items:center;overflow:hidden;justify-content:flex-end;padding-right:4.5px;font-size:26px;letter-spacing:0.55px;color:#000"><span style="white-space:nowrap;line-height:1;position:relative;top:-2px">资产减值损失（损失以<span style="padding:0 1.3px">“</span>-<span style="padding:0 1.3px">”</span>号填列）-本年累计金额</span></div>
<div class="a" style="left:80px;top:916px;width:476px;height:40px;background:#e8f0ef;"></div>
<div class="a" style="left:558px;top:916px;width:1264px;height:40px;background:#e8f0ef;"></div>
<div class="a" style="left:80px;top:956px;width:1744px;height:2px;background:#000;"></div>
<div class="a" style="left:556px;top:916px;width:2px;height:42px;background:#000;"></div>
<div class="a" style="left:902px;top:916px;width:2px;height:42px;background:#000;"></div>
<div class="a" style="left:1222px;top:916px;width:2px;height:42px;background:#000;"></div>
<div class="a" style="left:1522px;top:916px;width:2px;height:42px;background:#000;"></div>
<div class="a" style="left:1822px;top:916px;width:2px;height:42px;background:#000;"></div>
<div class="a" style="left:80px;top:916px;width:476px;height:40px;display:flex;align-items:center;overflow:hidden;justify-content:flex-end;padding-right:4.5px;font-size:26px;letter-spacing:0.55px;color:#000"><span style="white-space:nowrap;line-height:1;position:relative;top:-2px">资产处置收益（损失以<span style="padding:0 1.3px">“</span>-<span style="padding:0 1.3px">”</span>号填列）-本年累计金额</span></div>
</div>
<div class="a" style="left:2188px;top:244px;width:2px;height:944px;background:#999"></div>
<div class="a" style="left:2190px;top:244px;width:42px;height:998px;background:#e5e5e5"></div>
<div class="a" style="left:2196px;top:274px;width:30px;height:882px;background:#dadada"></div>
<div class="a" style="left:2196px;top:244px;width:30px;height:30px;background:#fff;border:2px solid #a0a0a0;border-radius:4px 4px 0 0"></div>
<svg class="a" style="left:2203px;top:253px" width="16" height="10" viewBox="0 0 16 10"><path d="M0.5 9L8 1L15.5 9Z" fill="#777"/></svg>
<div class="a" style="left:2196px;top:312px;width:30px;height:356px;background:#fff;border:2px solid #a0a0a0"></div>
<div class="a" style="left:2196px;top:1156px;width:30px;height:30px;background:#fff;border:2px solid #a0a0a0;border-radius:0 0 4px 4px"></div>
<svg class="a" style="left:2203px;top:1167px" width="16" height="10" viewBox="0 0 16 10"><path d="M0.5 1L8 9L15.5 1Z" fill="#777"/></svg>
<div class="a" style="left:52px;top:1186px;width:2136px;height:2px;background:#8f8f8f"></div>
<div class="a" style="left:52px;top:1188px;width:2138px;height:54px;background:#e5e5e5"></div>
<svg class="a" style="left:103px;top:1207px" width="10" height="16" viewBox="0 0 10 16"><path d="M9 1V15L1 8Z" fill="#c8c8c8"/></svg>
<svg class="a" style="left:161px;top:1207px" width="10" height="16" viewBox="0 0 10 16"><path d="M1 1V15L9 8Z" fill="#c8c8c8"/></svg>
<div class="a" style="left:250px;top:1186px;width:140px;height:50px;background:#fff;border-left:2px solid #a0a0a0;border-right:2px solid #a0a0a0;border-bottom:4px solid #217346"></div>
<div class="t" style="left:276px;top:1198px;font-size:28px;color:#217346;font-weight:bold;transform:scaleX(0.915);transform-origin:0 0">Sheet1</div>
<div class="a" style="left:1090px;top:1206px;width:4px;height:4px;background:#a8a8a8"></div>
<div class="a" style="left:1090px;top:1214px;width:4px;height:4px;background:#a8a8a8"></div>
<div class="a" style="left:1090px;top:1222px;width:4px;height:4px;background:#a8a8a8"></div>
<div class="a" style="left:1120px;top:1200px;width:1068px;height:30px;background:#dadada"></div>
<div class="a" style="left:1120px;top:1200px;width:32px;height:30px;background:#fff;border:2px solid #a0a0a0;border-radius:4px 0 0 4px"></div>
<svg class="a" style="left:1129px;top:1207px" width="10" height="16" viewBox="0 0 10 16"><path d="M9 0.5V15.5L1 8Z" fill="#777"/></svg>
<div class="a" style="left:1148px;top:1200px;width:562px;height:30px;background:#fff;border:2px solid #a0a0a0"></div>
<div class="a" style="left:2158px;top:1200px;width:30px;height:30px;background:#fff;border:2px solid #a0a0a0;border-radius:0 4px 4px 0"></div>
<svg class="a" style="left:2169px;top:1207px" width="10" height="16" viewBox="0 0 10 16"><path d="M1 0.5V15.5L9 8Z" fill="#777"/></svg>
</body></html>
